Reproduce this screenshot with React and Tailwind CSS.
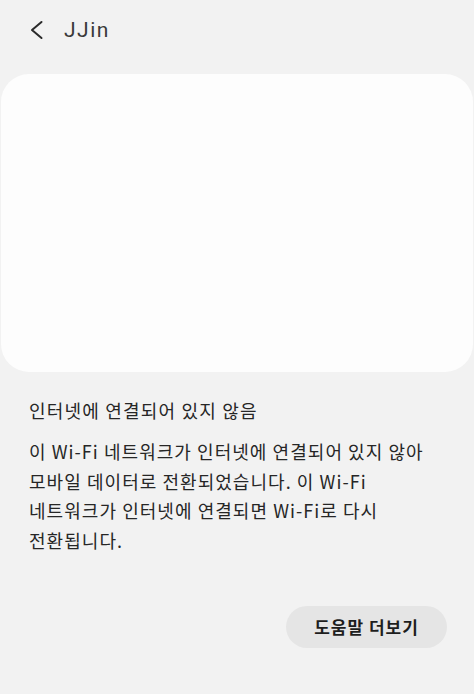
export default function App() {
  const font = { fontFamily: '"Noto Sans CJK KR", "Noto Sans", Roboto, sans-serif' };
  return (
    <div className="w-[474px] h-[694px] bg-[#f2f2f2] flex flex-col overflow-hidden" style={font}>
      <div className="h-[60px] flex items-center pl-[29px]">
        <svg width="16" height="20" viewBox="0 0 16 20" className="text-[#2a2a2a]">
          <path d="M12.5 2 L3 10 L12.5 18" fill="none" stroke="currentColor" strokeWidth="2" strokeLinecap="round" strokeLinejoin="round" />
        </svg>
        <span className="ml-[19px] text-[21px] tracking-[1.5px] text-[#3a3a3a] leading-none" style={{ fontFamily: 'Roboto, "Noto Sans", sans-serif' }}>JJin</span>
      </div>
      <div className="mt-[14px] mx-[1px] h-[298px] rounded-[28px] bg-[#fdfdfd]" />
      <div className="px-[29px] pt-[26px] text-[#262626]">
        <div className="text-[18px] leading-[24px] tracking-[1.2px]">인터넷에 연결되어 있지 않음</div>
        <p className="mt-[15px] text-[18px] leading-[29.5px] tracking-[1.05px]">
          이 Wi-Fi 네트워크가 인터넷에 연결되어 있지 않아<br />
          모바일 데이터로 전환되었습니다. 이 Wi-Fi<br />
          네트워크가 인터넷에 연결되면 Wi-Fi로 다시<br />
          전환됩니다.
        </p>
      </div>
      <div className="flex-1" />
      <div className="flex justify-end pr-[27px] pb-[46px]">
        <button className="w-[161px] h-[42px] rounded-full bg-[#e5e5e5] text-[17px] tracking-[1px] font-semibold text-[#1e1e1e]">
          도움말 더보기
        </button>
      </div>
    </div>
  );
}
